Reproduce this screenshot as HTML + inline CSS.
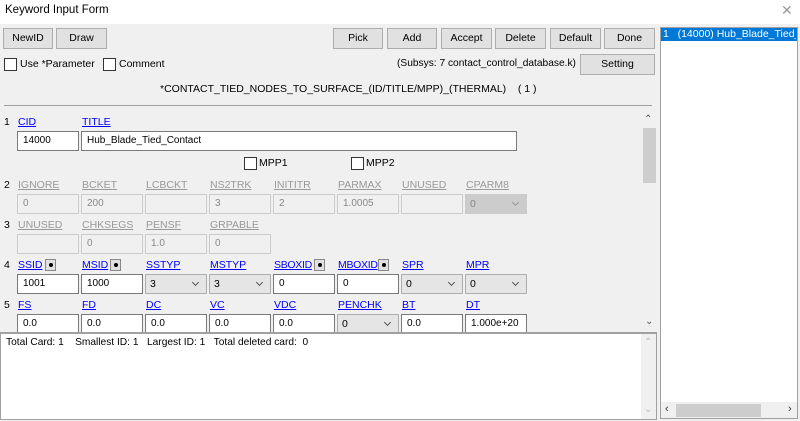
<!DOCTYPE html>
<html><head><style>
*{margin:0;padding:0;box-sizing:border-box}
body{width:800px;height:421px;background:#f0f0f0;font-family:"Liberation Sans",sans-serif;font-size:10.5px;color:#000;position:relative;overflow:hidden}
.a{position:absolute;white-space:nowrap}
.btn{position:absolute;height:21px;background:#e1e1e1;border:1px solid #adadad;text-align:center;line-height:19px;font-size:10.5px}
.cb{position:absolute;width:13px;height:13px;border:1px solid #333;background:#fff}
.lb{position:absolute;color:#00f;text-decoration:underline;font-size:10.5px}
.lg{position:absolute;color:#999;text-decoration:underline;font-size:10.5px}
.in{position:absolute;height:20px;width:62px;background:#fff;border:1px solid #7a7a7a;padding-left:5px;line-height:18px;font-size:10px}
.dis{background:#f0f0f0;border:1px solid #ccc;color:#888}
.sel{position:absolute;height:20px;width:62px;background:#e5e5e5;border:1px solid #adadad;padding-left:4px;line-height:19px;font-size:10.5px}
.sel:after{content:"";position:absolute;right:8px;top:5px;width:4px;height:4px;border-right:1px solid #555;border-bottom:1px solid #555;transform:rotate(45deg)}
.sd{background:#ccc;border-color:#ccc;color:#888}
.sd:after{border-color:#999}
.rn{position:absolute;left:4px;font-size:10.5px}
.pk{position:absolute;width:11px;height:12px;border:1px solid #888;background:#e1e1e1}
.pk:after{content:"";position:absolute;left:3px;top:3px;width:4px;height:4px;background:#000;border-radius:50%}
</style></head><body>
<div class="a" style="left:0;top:0;width:800px;height:24px;background:#fff"></div>
<div class="a" style="left:5px;top:4px;font-size:11.5px">Keyword Input Form</div>
<div class="a" style="left:781px;top:2px;font-size:14px;color:#999">✕</div>

<div class="btn" style="left:3px;top:28px;width:50px">NewID</div>
<div class="btn" style="left:56px;top:28px;width:51px">Draw</div>
<div class="btn" style="left:333px;top:28px;width:50px">Pick</div>
<div class="btn" style="left:387px;top:28px;width:50px">Add</div>
<div class="btn" style="left:441px;top:28px;width:51px">Accept</div>
<div class="btn" style="left:495px;top:28px;width:51px">Delete</div>
<div class="btn" style="left:550px;top:28px;width:51px">Default</div>
<div class="btn" style="left:604px;top:28px;width:51px">Done</div>

<div class="cb" style="left:4px;top:58px"></div><div class="a" style="left:20px;top:58px">Use *Parameter</div>
<div class="cb" style="left:103px;top:58px"></div><div class="a" style="left:119px;top:58px">Comment</div>
<div class="a" style="left:397px;top:58px;font-size:10.2px">(Subsys: 7 contact_control_database.k)</div>
<div class="btn" style="left:580px;top:54px;width:75px">Setting</div>
<div class="a" style="left:160px;top:83px">*CONTACT_TIED_NODES_TO_SURFACE_(ID/TITLE/MPP)_(THERMAL)&nbsp;&nbsp;&nbsp; ( 1 )</div>
<div class="a" style="left:4px;top:105px;width:648px;height:1px;background:#a0a0a0"></div>

<div class="a" style="left:0;top:110px;width:641px;height:223px;overflow:hidden">
<div style="position:relative;top:-110px">
<div class="rn" style="top:116px">1</div>
<div class="lb" style="left:18px;top:116px">CID</div><div class="lb" style="left:82px;top:116px">TITLE</div>
<div class="in" style="left:17px;top:131px">14000</div>
<div class="in" style="left:81px;top:131px;width:436px">Hub_Blade_Tied_Contact</div>
<div class="cb" style="left:244px;top:157px"></div><div class="a" style="left:259px;top:157px">MPP1</div>
<div class="cb" style="left:351px;top:157px"></div><div class="a" style="left:366px;top:157px">MPP2</div>

<div class="rn" style="top:179px">2</div>
<div class="lg" style="left:18px;top:179px">IGNORE</div><div class="lg" style="left:82px;top:179px">BCKET</div><div class="lg" style="left:146px;top:179px">LCBCKT</div><div class="lg" style="left:210px;top:179px">NS2TRK</div><div class="lg" style="left:274px;top:179px">INITITR</div><div class="lg" style="left:338px;top:179px">PARMAX</div><div class="lg" style="left:402px;top:179px">UNUSED</div><div class="lg" style="left:466px;top:179px">CPARM8</div>
<div class="in dis" style="left:17px;top:194px">0</div><div class="in dis" style="left:81px;top:194px">200</div><div class="in dis" style="left:145px;top:194px"></div><div class="in dis" style="left:209px;top:194px">3</div><div class="in dis" style="left:273px;top:194px">2</div><div class="in dis" style="left:337px;top:194px">1.0005</div><div class="in dis" style="left:401px;top:194px"></div><div class="sel sd" style="left:465px;top:194px">0</div>

<div class="rn" style="top:219px">3</div>
<div class="lg" style="left:18px;top:219px">UNUSED</div><div class="lg" style="left:82px;top:219px">CHKSEGS</div><div class="lg" style="left:146px;top:219px">PENSF</div><div class="lg" style="left:210px;top:219px">GRPABLE</div>
<div class="in dis" style="left:17px;top:234px"></div><div class="in dis" style="left:81px;top:234px">0</div><div class="in dis" style="left:145px;top:234px">1.0</div><div class="in dis" style="left:209px;top:234px">0</div>

<div class="rn" style="top:259px">4</div>
<div class="lb" style="left:18px;top:259px">SSID</div><div class="pk" style="left:45px;top:259px"></div>
<div class="lb" style="left:82px;top:259px">MSID</div><div class="pk" style="left:110px;top:259px"></div>
<div class="lb" style="left:146px;top:259px">SSTYP</div><div class="lb" style="left:210px;top:259px">MSTYP</div>
<div class="lb" style="left:274px;top:259px;letter-spacing:-0.3px">SBOXID</div><div class="pk" style="left:314px;top:259px"></div>
<div class="lb" style="left:338px;top:259px;letter-spacing:-0.3px">MBOXID</div><div class="pk" style="left:378px;top:259px"></div>
<div class="lb" style="left:402px;top:259px">SPR</div><div class="lb" style="left:466px;top:259px">MPR</div>
<div class="in" style="left:17px;top:274px">1001</div><div class="in" style="left:81px;top:274px">1000</div><div class="sel" style="left:145px;top:274px">3</div><div class="sel" style="left:209px;top:274px">3</div><div class="in" style="left:273px;top:274px">0</div><div class="in" style="left:337px;top:274px">0</div><div class="sel" style="left:401px;top:274px">0</div><div class="sel" style="left:465px;top:274px">0</div>

<div class="rn" style="top:299px">5</div>
<div class="lb" style="left:18px;top:299px">FS</div><div class="lb" style="left:82px;top:299px">FD</div><div class="lb" style="left:146px;top:299px">DC</div><div class="lb" style="left:210px;top:299px">VC</div><div class="lb" style="left:274px;top:299px">VDC</div><div class="lb" style="left:338px;top:299px">PENCHK</div><div class="lb" style="left:402px;top:299px">BT</div><div class="lb" style="left:466px;top:299px">DT</div>
<div class="in" style="left:17px;top:314px">0.0</div><div class="in" style="left:81px;top:314px">0.0</div><div class="in" style="left:145px;top:314px">0.0</div><div class="in" style="left:209px;top:314px">0.0</div><div class="in" style="left:273px;top:314px">0.0</div><div class="sel" style="left:337px;top:314px">0</div><div class="in" style="left:401px;top:314px">0.0</div><div class="in" style="left:465px;top:314px">1.000e+20</div>
</div></div>

<div class="a" style="left:641px;top:113px;width:16px;height:219px;background:#f0f0f0"></div>
<div class="a" style="left:644px;top:114px;font-size:10px;color:#555">⌃</div>
<div class="a" style="left:643px;top:128px;width:13px;height:55px;background:#cdcdcd"></div>
<div class="a" style="left:645px;top:316px;font-size:10px;color:#555">⌄</div>

<div class="a" style="left:0;top:332px;width:657px;height:88px;background:#fff;border:1px solid #a0a0a0;border-top:2px solid #a0a0a0"></div>
<div class="a" style="left:641px;top:334px;width:15px;height:85px;background:#f0f0f0"></div>
<div class="a" style="left:644px;top:337px;font-size:10px;color:#bbb">⌃</div>
<div class="a" style="left:644px;top:404px;font-size:10px;color:#bbb">⌄</div>
<div class="a" style="left:6px;top:337px;font-size:10.2px">Total Card: 1&nbsp;&nbsp;&nbsp; Smallest ID: 1&nbsp;&nbsp; Largest ID: 1&nbsp;&nbsp; Total deleted card:&nbsp; 0</div>

<div class="a" style="left:660px;top:27px;width:138px;height:392px;background:#fff;border:1px solid #a0a0a0"></div>
<div class="a" style="left:661px;top:28px;width:136px;height:13px;background:#0078d7"></div>
<div class="a" style="left:663px;top:28px;color:#fff;font-size:10.5px;line-height:13px;width:133px;overflow:hidden">1&nbsp;&nbsp; (14000) Hub_Blade_Tied_Contact</div>
<div class="a" style="left:661px;top:402px;width:136px;height:16px;background:#f0f0f0"></div>
<div class="a" style="left:676px;top:404px;width:85px;height:13px;background:#cdcdcd"></div>
<div class="a" style="left:665px;top:403px;font-size:11px;color:#333">‹</div>
<div class="a" style="left:788px;top:403px;font-size:11px;color:#333">›</div>
</body></html>
